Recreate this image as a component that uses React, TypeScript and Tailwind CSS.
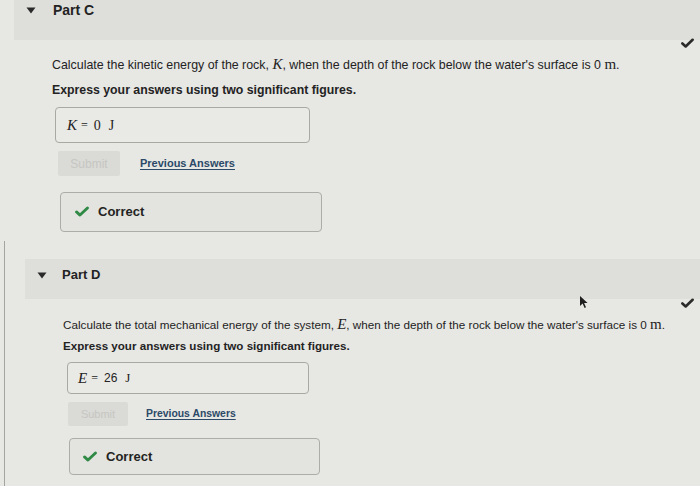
import type { ReactNode } from 'react';

function Caret() {
  return (
    <svg width="10" height="7" viewBox="0 0 10 7" className="shrink-0">
      <path d="M0.5 0.5 L9.5 0.5 L5 6.5 Z" fill="#2a2a2a" />
    </svg>
  );
}

function Tick({ color = '#2f8a45', size = 14 }: { color?: string; size?: number }) {
  return (
    <svg width={size} height={size * 0.8} viewBox="0 0 14 11" className="shrink-0">
      <path d="M1.5 5.8 L5 9 L12.5 1.8" fill="none" stroke={color} strokeWidth="2.8" strokeLinecap="round" strokeLinejoin="round" />
    </svg>
  );
}

function MathVar({ children }: { children: ReactNode }) {
  return <span className="font-['Liberation_Serif','Times_New_Roman',serif] italic text-[15px]">{children}</span>;
}

function MathUnit({ children }: { children: ReactNode }) {
  return <span className="font-['Liberation_Serif','Times_New_Roman',serif] text-[15px]">{children}</span>;
}

export default function App() {
  return (
    <div className="w-[700px] h-[486px] overflow-hidden bg-[#e7e7e3] text-[#232323] font-['Liberation_Sans',Arial,sans-serif]">
      {/* Part C */}
      <section className="relative ml-[14px]">
        <div className="h-[40px] bg-[#dededa] flex items-start gap-[17px] pl-[12px] pt-[1px]">
          <div className="pt-[6px]">
            <Caret />
          </div>
          <span className="text-[14px] font-semibold leading-[18px]">Part C</span>
        </div>
        <div className="absolute right-[6px] top-[38px]">
          <Tick color="#2b2b2b" size={13} />
        </div>

        <div className="pl-[38px]">
          <p className="mt-[14px] text-[12.4px] leading-[20px]">
            Calculate the kinetic energy of the rock, <MathVar>K</MathVar>, when the depth of the rock below the water's surface is 0 <MathUnit>m</MathUnit>.
          </p>
          <p className="mt-[5px] text-[12.3px] leading-[20px] font-bold">Express your answers using two significant figures.</p>

          <div className="mt-[7px] ml-[3px] w-[255px] h-[36px] rounded-[4px] border border-[#a9a9a4] bg-[#e9e9e5] flex items-center pl-[11px] gap-[4px] font-['Liberation_Serif',serif] text-[14px]">
            <MathVar>K</MathVar>
            <span className="text-[12px]">=</span>
            <span className="ml-[2px]">0</span>
            <span className="ml-[4px]">J</span>
          </div>

          <div className="mt-[8px] ml-[6px] flex items-center gap-[20px]">
            <div className="w-[62px] h-[25px] bg-[#dadad6] rounded-[2px] flex items-center justify-center text-[12px] text-[#c6c6c2]">Submit</div>
            <span className="text-[11px] font-bold text-[#2c4a68] underline underline-offset-2">Previous Answers</span>
          </div>

          <div className="mt-[16px] ml-[8px] w-[262px] h-[40px] rounded-[4px] border border-[#acaca8] bg-[#e3e3df] flex items-center pl-[14px] gap-[9px]">
            <Tick />
            <span className="text-[13px] font-bold">Correct</span>
          </div>
        </div>
      </section>

      {/* Part D */}
      <div className="mt-[9px] ml-[4px] border-l border-[#a4a4a0] h-[270px] pt-[18px] pl-[20px]">
        <section className="relative">
          <div className="h-[40px] bg-[#dededa] flex items-center gap-[15px] pl-[12px] pb-[8px]">
            <Caret />
            <span className="text-[13px] font-semibold">Part D</span>
          </div>
          <div className="absolute right-[6px] top-[39px]">
            <Tick color="#2b2b2b" size={13} />
          </div>
          <svg width="10" height="14" viewBox="0 0 10 14" className="absolute left-[554px] top-[36px]">
            <path d="M1 1 L1 11 L3.6 8.6 L5.6 13 L7 12.3 L5.1 8 L8.6 8 Z" fill="#1f1f1f" />
          </svg>

          <div className="pl-[38px]">
            <p className="mt-[16px] text-[11.7px] leading-[18px]">
              Calculate the total mechanical energy of the system, <MathVar>E</MathVar>, when the depth of the rock below the water's surface is 0 <MathUnit>m</MathUnit>.
            </p>
            <p className="mt-[3px] text-[11.6px] leading-[18px] font-bold">Express your answers using two significant figures.</p>

            <div className="mt-[7px] ml-[4px] w-[242px] h-[32px] rounded-[4px] border border-[#a9a9a4] bg-[#e9e9e5] flex items-center pl-[10px] gap-[4px] font-['Liberation_Serif',serif] text-[13px]">
              <MathVar>E</MathVar>
              <span className="text-[12px]">=</span>
              <span className="ml-[2px] font-['Liberation_Sans',Arial,sans-serif] text-[12px]">26</span>
              <span className="ml-[4px]">J</span>
            </div>

            <div className="mt-[8px] ml-[5px] flex items-center gap-[18px]">
              <div className="w-[60px] h-[24px] bg-[#dadad6] rounded-[2px] flex items-center justify-center text-[11px] text-[#c6c6c2]">Submit</div>
              <span className="text-[10.4px] font-bold text-[#2c4a68] underline underline-offset-2">Previous Answers</span>
            </div>

            <div className="mt-[12px] ml-[6px] w-[251px] h-[37px] rounded-[4px] border border-[#acaca8] bg-[#e3e3df] flex items-center pl-[13px] gap-[9px]">
              <Tick />
              <span className="text-[13px] font-bold">Correct</span>
            </div>
          </div>
        </section>
      </div>
    </div>
  );
}
